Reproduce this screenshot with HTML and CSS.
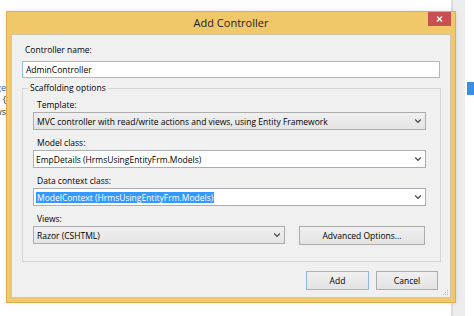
FILE: index.html
```html
<!DOCTYPE html>
<html>
<head>
<meta charset="utf-8">
<title>Add Controller</title>
<link rel="stylesheet" href="styles.css">
</head>
<body>
<div class="bg-left"><span class="link">Page</span><br>{<br>Views</div>
<div class="bg-band"></div>
<div class="bg-blue"></div>

<div class="dialog">
  <div class="titlebar">
    <span class="title">Add Controller</span>
    <div class="close">
      <svg width="23" height="14" viewBox="0 0 23 14"><path d="M9 4.5 L14 9.5 M14 4.5 L9 9.5" stroke="#fff" stroke-width="1.3" fill="none"/></svg>
    </div>
  </div>
  <div class="panel">
    <div class="lbl top">Controller name:</div>
    <div class="input focus">AdminController</div>

    <fieldset class="group">
      <legend>Scaffolding options</legend>
      <div class="fields">
        <div class="field">
          <div class="lbl">Template:</div>
          <div class="select grey"><span class="val">MVC controller with read/write actions and views, using Entity Framework</span>
            <svg class="chev" width="14" height="8" viewBox="0 0 14 8"><path d="M4.2 2.5 L7 5.3 L9.8 2.5" stroke="#444" stroke-width="1.2" fill="none"/></svg></div>
        </div>
        <div class="field">
          <div class="lbl">Model class:</div>
          <div class="select"><span class="val">EmpDetails (HrmsUsingEntityFrm.Models)</span>
            <svg class="chev" width="14" height="8" viewBox="0 0 14 8"><path d="M4.2 2.5 L7 5.3 L9.8 2.5" stroke="#444" stroke-width="1.2" fill="none"/></svg></div>
        </div>
        <div class="field">
          <div class="lbl">Data context class:</div>
          <div class="select"><span class="val"><span class="sel">ModelContext (HrmsUsingEntityFrm.Models)</span></span>
            <svg class="chev" width="14" height="8" viewBox="0 0 14 8"><path d="M4.2 2.5 L7 5.3 L9.8 2.5" stroke="#444" stroke-width="1.2" fill="none"/></svg></div>
        </div>
        <div class="field">
          <div class="lbl">Views:</div>
          <div class="row">
            <div class="select grey views"><span class="val">Razor (CSHTML)</span>
              <svg class="chev" width="14" height="8" viewBox="0 0 14 8"><path d="M4.2 2.5 L7 5.3 L9.8 2.5" stroke="#444" stroke-width="1.2" fill="none"/></svg></div>
            <div class="btn adv">Advanced Options...</div>
          </div>
        </div>
      </div>
    </fieldset>

    <div class="footer">
      <div class="btn default add">Add</div>
      <div class="btn cancel">Cancel</div>
    </div>
    <svg class="grip" width="6" height="6" viewBox="0 0 6 6">
      <rect x="4" y="0" width="1" height="1" fill="#b8b8b8"/>
      <rect x="2" y="2" width="1" height="1" fill="#b8b8b8"/>
      <rect x="4" y="2" width="1" height="1" fill="#b8b8b8"/>
      <rect x="0" y="4" width="1" height="1" fill="#b8b8b8"/>
      <rect x="2" y="4" width="1" height="1" fill="#b8b8b8"/>
      <rect x="4" y="4" width="1" height="1" fill="#b8b8b8"/>
    </svg>
  </div>
</div>
</body>
</html>
```

FILE: styles.css
```css
* { box-sizing: border-box; }
html, body { margin: 0; padding: 0; }
body {
  width: 474px;
  height: 316px;
  background: #ffffff;
  font-family: "Open Sans", "Noto Sans", sans-serif;
  font-size: 8.5px;
  color: #000;
  overflow: hidden;
  position: relative;
}

/* background application pieces */
.bg-left {
  position: absolute;
  left: -30px;
  top: 82px;
  width: 36px;
  text-align: right;
  font-size: 9px;
  line-height: 12px;
  color: #333;
  white-space: nowrap;
}
.bg-left .link { color: #3a5fcd; }
.bg-band {
  position: absolute;
  left: 451px;
  top: 0;
  width: 14px;
  height: 316px;
  background: #ededed;
  border-left: 2px solid #dcdcdc;
}
.bg-blue {
  position: absolute;
  left: 467px;
  top: 82px;
  width: 7px;
  height: 13px;
  background: #3a8fe2;
}

/* dialog window */
.dialog {
  position: absolute;
  left: 6px;
  top: 11px;
  width: 450px;
  height: 292px;
  background: #f1c869;
  border: 1px solid #dcae52;
  padding: 0 4px 4px;
  display: flex;
  flex-direction: column;
  box-shadow: 0 0 5px rgba(0,0,0,0.10);
}
.titlebar {
  height: 22px;
  flex: none;
  display: grid;
  grid-template-columns: 1fr auto 1fr;
}
.title {
  grid-column: 2;
  font-size: 11px;
  line-height: 22px;
  color: #222;
}
.close {
  grid-column: 3;
  justify-self: end;
  align-self: start;
  width: 23px;
  height: 14px;
  background: #c95050;
  display: flex;
}
.panel {
  flex: 1;
  background: #f0f0f0;
  border: 1px solid #cfc6ad;
  padding: 8px 10px 0 10px;
  position: relative;
  display: flex;
  flex-direction: column;
}

.lbl {
  line-height: 14px;
  height: 14px;
  padding-left: 4px;
  white-space: nowrap;
}
.lbl.top { padding-left: 3px; }

.input {
  margin-top: 4px;
  height: 17px;
  background: #fff;
  border: 1px solid #abadb3;
  padding-left: 3px;
  line-height: 15px;
  white-space: nowrap;
}
.input.focus { border-color: #98bde3; }

.group {
  margin: 4px -1px 0 0;
  padding: 4px 14px 16px 10px;
  border: 1px solid #d5d5d5;
  min-width: 0;
}
.group legend {
  margin-left: -5px;
  padding: 0 2px;
  line-height: 12px;
}
.fields {
  display: flex;
  flex-direction: column;
  gap: 6px;
}

.select {
  height: 18px;
  background: #fff;
  border: 1px solid #abadb3;
  display: flex;
  align-items: center;
  padding-left: 2px;
  white-space: nowrap;
}
.select.grey {
  background: linear-gradient(#f0f0f0, #e4e4e4);
  border-color: #acacac;
  padding-left: 3px;
}
.select .val { flex: 1; overflow: hidden; }
.select .chev { flex: none; }
.sel {
  background: #3399ff;
  color: #fff;
  padding: 1px 1px;
}

.row {
  display: flex;
  gap: 14px;
}
.views { width: 252px; }

.btn {
  height: 19px;
  border: 1px solid #acacac;
  background: linear-gradient(#f0f0f0, #e3e3e3);
  display: flex;
  align-items: center;
  justify-content: center;
  white-space: nowrap;
}
.adv { width: 126px; }

.footer {
  margin-top: 9px;
  display: flex;
  justify-content: flex-end;
  gap: 7px;
  padding-right: 2px;
}
.add { width: 63px; }
.cancel { width: 62px; }
.default { border-color: #8fb8e4; }

.grip {
  position: absolute;
  right: 1px;
  bottom: 1px;
}
```
